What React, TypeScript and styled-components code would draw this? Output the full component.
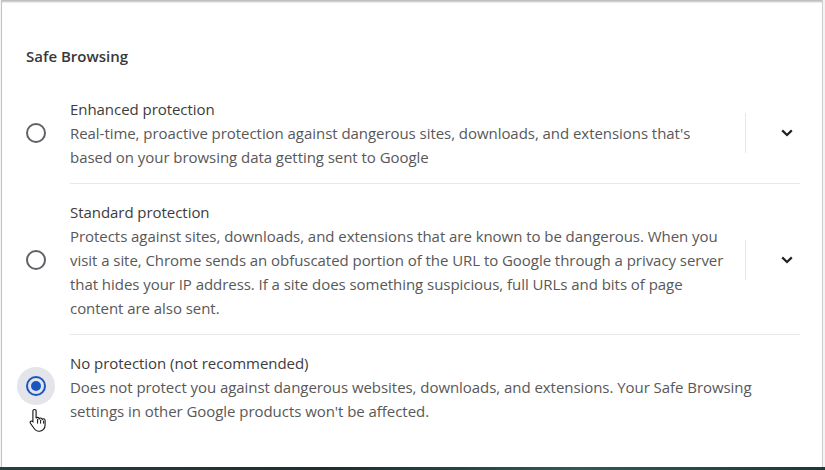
import React, { FC } from "react";
import styled, { createGlobalStyle } from "styled-components";

const colors = {
    heading: "#383838",
    title: "#3c3c3c",
    text: "#585858",
    line: "#e8e8e8",
    radio: "#5f6368",
    blue: "#1a56c2",
    halo: "#e3e5ea",
};

type Option = {
    title: string;
    lines: string[];
    checked?: boolean;
    expandable?: boolean;
};

const options: Option[] = [
    {
        title: "Enhanced protection",
        lines: [
            "Real-time, proactive protection against dangerous sites, downloads, and extensions that's",
            "based on your browsing data getting sent to Google",
        ],
        expandable: true,
    },
    {
        title: "Standard protection",
        lines: [
            "Protects against sites, downloads, and extensions that are known to be dangerous. When you",
            "visit a site, Chrome sends an obfuscated portion of the URL to Google through a privacy server",
            "that hides your IP address. If a site does something suspicious, full URLs and bits of page",
            "content are also sent.",
        ],
        expandable: true,
    },
    {
        title: "No protection (not recommended)",
        lines: [
            "Does not protect you against dangerous websites, downloads, and extensions. Your Safe Browsing",
            "settings in other Google products won't be affected.",
        ],
        checked: true,
    },
];

const GlobalStyle = createGlobalStyle`
    html, body {
        margin: 0;
        padding: 0;
        background: #ffffff;
    }
    body {
        font-family: "Open Sans", "Noto Sans", sans-serif;
    }
`;

const Chevron: FC = () => (
    <svg width="12" height="8" viewBox="0 0 12 8">
        <path d="M1.2 1.4 L6 6 L10.8 1.4" fill="none" stroke="#202124" strokeWidth="2.2" />
    </svg>
);

const HandCursor: FC = () => (
    <svg width="18" height="24" viewBox="0 0 18 24">
        <path
            d="M5.5 1.5c.9 0 1.6.7 1.6 1.6v7.2c.3-.6.9-.9 1.5-.9.9 0 1.5.6 1.6 1.4.3-.5.8-.8 1.4-.8.9 0 1.5.6 1.6 1.4.3-.4.8-.6 1.3-.6.9 0 1.6.7 1.6 1.6v4.6c0 3.4-2.5 6.2-5.8 6.2H9.6c-1.8 0-3.1-.8-4.1-2.2L1.4 15.3c-.5-.8-.3-1.7.4-2.1.7-.4 1.5-.2 2 .4l.1.1V3.1c0-.9.7-1.6 1.6-1.6z"
            fill="#ffffff"
            stroke="#111111"
            strokeWidth="1.1"
        />
        <path d="M8.6 11v4.6M11.6 11.8v3.8M14.6 12.6v3" stroke="#111111" strokeWidth="1" />
    </svg>
);

const OptionRow: FC<{ option: Option; last: boolean }> = ({ option, last }) => (
    <Row>
        <RadioCell>
            <RadioHalo $checked={!!option.checked}>
                <Radio $checked={!!option.checked} />
            </RadioHalo>
            {option.checked && (
                <CursorSpot>
                    <HandCursor />
                </CursorSpot>
            )}
        </RadioCell>
        <RowBody $last={last}>
            <TextBlock>
                <OptionTitle>{option.title}</OptionTitle>
                {option.lines.map((line) => (
                    <OptionLine key={line}>{line}</OptionLine>
                ))}
            </TextBlock>
            {option.expandable && (
                <ExpandCell>
                    <Divider />
                    <ExpandButton>
                        <Chevron />
                    </ExpandButton>
                </ExpandCell>
            )}
        </RowBody>
    </Row>
);

const App: FC = () => (
    <>
        <GlobalStyle />
        <Page>
            <Card>
                <Heading>Safe Browsing</Heading>
                <OptionList>
                    {options.map((option, i) => (
                        <OptionRow key={option.title} option={option} last={i === options.length - 1} />
                    ))}
                </OptionList>
            </Card>
            <DesktopStrip />
        </Page>
    </>
);

export default App;

const Page = styled.div`
    width: 825px;
    height: 470px;
    display: flex;
    flex-direction: column;
    overflow: hidden;
    background: #f4f4f4;
`;

const Card = styled.div`
    flex: 1;
    margin: 0 2px 0 1px;
    background: #ffffff;
    border-left: 1px solid #c4c4c4;
    border-right: 1px solid #cfcfcf;
    box-shadow: inset 0 3px 2px -1px #bdbdbd;
    padding: 44px 22px 0 24px;
`;

const DesktopStrip = styled.div`
    height: 3px;
    background: linear-gradient(90deg, #27403e, #1d2e2d 40%, #2f5a55 70%, #1e3836);
`;

const Heading = styled.h2`
    margin: 0 0 13px;
    font-size: 15px;
    font-weight: 600;
    line-height: 24px;
    color: ${colors.heading};
`;

const OptionList = styled.div`
    display: flex;
    flex-direction: column;
`;

const Row = styled.div`
    display: flex;
    align-items: stretch;
`;

const RadioCell = styled.div`
    position: relative;
    width: 44px;
    display: flex;
    align-items: center;
`;

const RadioHalo = styled.div<{ $checked: boolean }>`
    width: 38px;
    height: 38px;
    margin-left: -9px;
    border-radius: 50%;
    display: flex;
    align-items: center;
    justify-content: center;
    background: ${(p) => (p.$checked ? colors.halo : "transparent")};
`;

const Radio = styled.div<{ $checked: boolean }>`
    width: 20px;
    height: 20px;
    box-sizing: border-box;
    border-radius: 50%;
    border: 2px solid ${(p) => (p.$checked ? colors.blue : colors.radio)};
    display: flex;
    align-items: center;
    justify-content: center;
    &::after {
        content: "";
        width: 10px;
        height: 10px;
        border-radius: 50%;
        background: ${(p) => (p.$checked ? colors.blue : "transparent")};
    }
`;

const CursorSpot = styled.div`
    position: absolute;
    left: 3px;
    top: 73px;
    line-height: 0;
`;

const RowBody = styled.div<{ $last: boolean }>`
    flex: 1;
    display: flex;
    align-items: center;
    padding: 16px 0 14px;
    border-bottom: ${(p) => (p.$last ? "none" : `1px solid ${colors.line}`)};
`;

const TextBlock = styled.div`
    flex: 1;
    font-size: 15px;
    line-height: 24px;
    letter-spacing: -0.05px;
`;

const OptionTitle = styled.div`
    color: ${colors.title};
`;

const OptionLine = styled.div`
    color: ${colors.text};
    white-space: nowrap;
`;

const ExpandCell = styled.div`
    display: flex;
    align-items: center;
    width: 55px;
`;

const Divider = styled.div`
    width: 1px;
    height: 40px;
    background: ${colors.line};
`;

const ExpandButton = styled.div`
    flex: 1;
    display: flex;
    justify-content: flex-end;
    padding-right: 7px;
    line-height: 0;
`;
